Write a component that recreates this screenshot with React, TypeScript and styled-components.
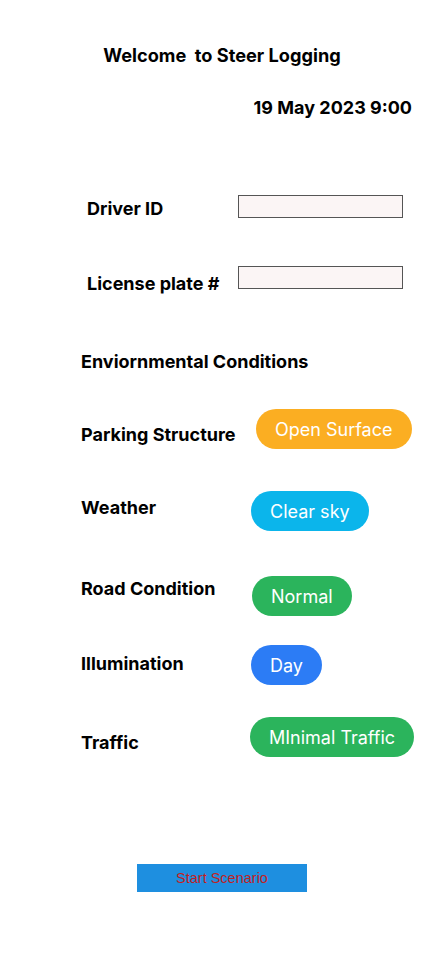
import styled, { createGlobalStyle } from "styled-components"

const GlobalStyle = createGlobalStyle`
    html, body {
        margin: 0;
        padding: 0;
        background: #ffffff;
    }
    body {
        font-family: 'Inter', 'Noto Sans', sans-serif;
        color: #000000;
    }
`

const Page = styled.div`
    width: 444px;
    min-height: 960px;
    padding-top: 44px;
    box-sizing: border-box;
    display: flex;
    flex-direction: column;
`

const Title = styled.div`
    font-size: 18.2px;
    line-height: 22px;
    font-weight: 700;
    text-align: center;
    white-space: pre;
`

const DateLine = styled.div`
    margin-top: 31px;
    padding-right: 32px;
    font-size: 18px;
    line-height: 22px;
    font-weight: 700;
    text-align: right;
`

const Form = styled.div`
    padding-left: 87px;
    margin-top: 76px;
    display: flex;
    flex-direction: column;
    gap: 47px;
`

const FieldRow = styled.div`
    display: flex;
    align-items: flex-start;
`

const Label = styled.div<{ $width: number; $shift: number }>`
    width: ${({ $width }) => $width}px;
    padding-top: ${({ $shift }) => $shift}px;
    font-size: 18px;
    line-height: 20px;
    font-weight: 700;
    white-space: nowrap;
`

const Input = styled.input`
    width: 165px;
    height: 23px;
    box-sizing: border-box;
    border: 1px solid #555555;
    background: #fbf5f5;
    margin: 0;
    padding: 0 4px;
    font-family: inherit;
`

const Environment = styled.div`
    padding-left: 81px;
    margin-top: 58px;
    display: flex;
    flex-direction: column;
`

const Heading = styled.div`
    font-size: 18px;
    line-height: 20px;
    font-weight: 700;
`

const ConditionRow = styled.div<{ $top: number }>`
    display: flex;
    align-items: flex-start;
    margin-top: ${({ $top }) => $top}px;
`

const Pill = styled.div<{ $color: string; $offset?: number }>`
    height: 40px;
    padding: 0 19px;
    margin-left: ${({ $offset }) => $offset || 0}px;
    border-radius: 20px;
    background: ${({ $color }) => $color};
    color: #ffffff;
    font-size: 18px;
    font-weight: 400;
    display: flex;
    align-items: center;
    justify-content: center;
    white-space: nowrap;
`

const Footer = styled.div`
    margin-top: 107px;
    display: flex;
    justify-content: center;
`

const StartButton = styled.button`
    width: 170px;
    height: 28px;
    border: none;
    background: #1e8fe0;
    color: #c21f1f;
    font-family: 'Liberation Sans', Arial, sans-serif;
    font-size: 14.5px;
    padding: 0;
    cursor: pointer;
`

const conditions = [
    { label: "Parking Structure", value: "Open Surface", color: "#fbae22", top: 37, shift: 16, offset: 5 },
    { label: "Weather", value: "Clear sky", color: "#0bb5eb", top: 42, shift: 7, offset: 0 },
    { label: "Road Condition", value: "Normal", color: "#2bb45c", top: 45, shift: 3, offset: 1 },
    { label: "Illumination", value: "Day", color: "#2c7cf5", top: 29, shift: 9, offset: 0 },
    { label: "Traffic", value: "MInimal Traffic", color: "#2bb45c", top: 32, shift: 16, offset: -1 },
]

export default function App() {
    return (
        <>
            <GlobalStyle />
            <Page>
                <Title>{"Welcome  to Steer Logging"}</Title>
                <DateLine>19 May 2023 9:00</DateLine>

                <Form>
                    <FieldRow>
                        <Label $width={151} $shift={4}>Driver ID</Label>
                        <Input />
                    </FieldRow>
                    <FieldRow>
                        <Label $width={151} $shift={8}>License plate #</Label>
                        <Input />
                    </FieldRow>
                </Form>

                <Environment>
                    <Heading>Enviornmental Conditions</Heading>
                    {
                        conditions.map((item) => (
                            <ConditionRow key={item.label} $top={item.top}>
                                <Label $width={170} $shift={item.shift}>{item.label}</Label>
                                <Pill $color={item.color} $offset={item.offset}>{item.value}</Pill>
                            </ConditionRow>
                        ))
                    }
                </Environment>

                <Footer>
                    <StartButton>Start Scenario</StartButton>
                </Footer>
            </Page>
        </>
    )
}
